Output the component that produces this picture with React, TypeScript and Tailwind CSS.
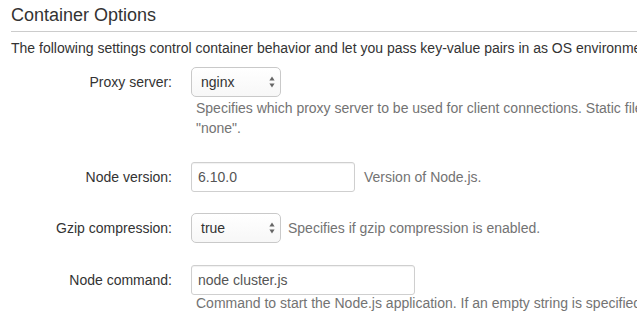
import React from 'react'

const Arrows = () => (
  <svg width="6" height="12" viewBox="0 0 6 12" className="shrink-0">
    <path d="M3 0.5 L5.6 4.5 L0.4 4.5 Z" fill="#666" />
    <path d="M3 11.5 L5.6 7.5 L0.4 7.5 Z" fill="#666" />
  </svg>
)

const FakeSelect = ({ value }: { value: string }) => (
  <div className="flex items-center justify-between w-[90px] h-[30px] pl-[9px] pr-[5px] border border-[#c9c9c9] rounded-[5px] bg-gradient-to-b from-white to-[#f7f7f7] text-[#333]">
    <span>{value}</span>
    <Arrows />
  </div>
)

const TextInput = ({ value, width }: { value: string; width: string }) => (
  <div
    className={`flex items-center h-[30px] pl-[6px] border border-[#cfcfcf] rounded-[3px] bg-white text-[#555] shadow-[inset_0_1px_1px_rgba(0,0,0,0.06)] ${width}`}
  >
    {value}
  </div>
)

const Label = ({ children }: { children: React.ReactNode }) => (
  <div className="w-[161px] shrink-0 text-right leading-[30px] text-[#333]">{children}</div>
)

export default function App() {
  return (
    <div
      className="w-[637px] h-[333px] overflow-hidden bg-white pl-[11px] text-[14px] leading-[20px] text-[#333]"
      style={{ fontFamily: '"Liberation Sans", Arial, sans-serif' }}
    >
      {/* Header */}
      <h3 className="pt-[5px] text-[18px] leading-[20px] text-[#333]">Container Options</h3>
      <div className="mt-[6px] border-t border-[#cccccc]" />
      <p className="mt-[6px] whitespace-nowrap">
        The following settings control container behavior and let you pass key-value pairs in as OS environment variables.
      </p>

      {/* Proxy server */}
      <div className="flex items-start mt-[9px]">
        <Label>Proxy server:</Label>
        <div className="ml-[19px]">
          <FakeSelect value="nginx" />
          <p className="mt-[1px] ml-[5px] text-[#737373] whitespace-nowrap">
            Specifies which proxy server to be used for client connections. Static file mappings and gzip compression are disabled if the proxy server is set to
            <br />
            "none".
          </p>
        </div>
      </div>

      {/* Node version */}
      <div className="flex items-center mt-[24px]">
        <Label>Node version:</Label>
        <div className="ml-[19px]">
          <TextInput value="6.10.0" width="w-[164px]" />
        </div>
        <span className="ml-[9px] text-[#737373] whitespace-nowrap">Version of Node.js.</span>
      </div>

      {/* Gzip */}
      <div className="flex items-center mt-[21px]">
        <Label>Gzip compression:</Label>
        <div className="ml-[19px]">
          <FakeSelect value="true" />
        </div>
        <span className="ml-[7px] text-[#737373] whitespace-nowrap">Specifies if gzip compression is enabled.</span>
      </div>

      {/* Node command */}
      <div className="flex items-start mt-[22px]">
        <Label>Node command:</Label>
        <div className="ml-[19px]">
          <TextInput value="node cluster.js" width="w-[224px]" />
          <p className="mt-[-2px] ml-[5px] text-[#737373] whitespace-nowrap">
            Command to start the Node.js application. If an empty string is specified, app.js is used, then server.js, then npm start, in that order.
          </p>
        </div>
      </div>
    </div>
  )
}
